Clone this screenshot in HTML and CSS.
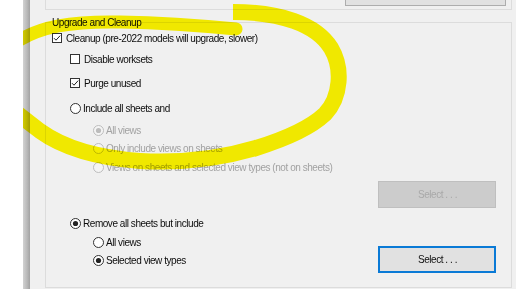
FILE: index.html
```html
<!DOCTYPE html>
<html>
<head>
<meta charset="utf-8">
<link rel="stylesheet" href="styles.css">
</head>
<body>
<div class="screen">
  <div class="desk"></div>
  <div class="frame"></div>
  <div class="dialog">
    <div class="prevbox"><div class="prevbtn"></div></div>
    <div class="group">
      <div class="legend">Upgrade and Cleanup</div>
      <div class="opt cb">
        <svg class="box" width="10" height="10" viewBox="0 0 10 10"><rect x="0.5" y="0.5" width="9" height="9" fill="#fff" stroke="#333"/><path d="M2 5.2 L4 7.2 L8.2 2.6" fill="none" stroke="#222" stroke-width="1"/></svg>
        <span>Cleanup (pre-2022 models will upgrade, slower)</span>
      </div>
      <div class="indent">
        <div class="opt cb m3">
          <svg class="box" width="10" height="10" viewBox="0 0 10 10"><rect x="0.5" y="0.5" width="9" height="9" fill="#fff" stroke="#333"/></svg>
          <span>Disable worksets</span>
        </div>
        <div class="opt cb m6">
          <svg class="box" width="10" height="10" viewBox="0 0 10 10"><rect x="0.5" y="0.5" width="9" height="9" fill="#fff" stroke="#333"/><path d="M2 5.2 L4 7.2 L8.2 2.6" fill="none" stroke="#222" stroke-width="1"/></svg>
          <span>Purge unused</span>
        </div>
        <div class="opt rb m7">
          <svg class="radio" width="11" height="11" viewBox="0 0 11 11"><circle cx="5.5" cy="5.5" r="5" fill="#fff" stroke="#333"/></svg>
          <span>Include all sheets and</span>
        </div>
        <div class="sub">
          <div class="opt rb off m4">
            <svg class="radio" width="11" height="11" viewBox="0 0 11 11"><circle cx="5.5" cy="5.5" r="5" fill="#f4f4f4" stroke="#bcbcbc"/><circle cx="5.5" cy="5.5" r="2.6" fill="#bcbcbc"/></svg>
            <span>All views</span>
          </div>
          <div class="opt rb off">
            <svg class="radio" width="11" height="11" viewBox="0 0 11 11"><circle cx="5.5" cy="5.5" r="5" fill="#f4f4f4" stroke="#bcbcbc"/></svg>
            <span>Only include views on sheets</span>
          </div>
          <div class="opt rb off m1">
            <svg class="radio" width="11" height="11" viewBox="0 0 11 11"><circle cx="5.5" cy="5.5" r="5" fill="#f4f4f4" stroke="#bcbcbc"/></svg>
            <span>Views on sheets and selected view types (not on sheets)</span>
          </div>
        </div>
      </div>
      <div class="btnrow">
        <div class="btn disabled">Select . . .</div>
      </div>
      <div class="lower">
        <div class="lowerleft">
          <div class="opt rb m6">
            <svg class="radio" width="11" height="11" viewBox="0 0 11 11"><circle cx="5.5" cy="5.5" r="5" fill="#fff" stroke="#333"/><circle cx="5.5" cy="5.5" r="2.6" fill="#222"/></svg>
            <span>Remove all sheets but include</span>
          </div>
          <div class="sub">
            <div class="opt rb m1">
              <svg class="radio" width="11" height="11" viewBox="0 0 11 11"><circle cx="5.5" cy="5.5" r="5" fill="#fff" stroke="#333"/></svg>
              <span>All views</span>
            </div>
            <div class="opt rb">
              <svg class="radio" width="11" height="11" viewBox="0 0 11 11"><circle cx="5.5" cy="5.5" r="5" fill="#fff" stroke="#333"/><circle cx="5.5" cy="5.5" r="2.6" fill="#222"/></svg>
              <span>Selected view types</span>
            </div>
          </div>
        </div>
        <div class="btn focused">Select . . .</div>
      </div>
    </div>
  </div>
  <svg class="ink" width="516" height="289" viewBox="0 0 516 289">
    <defs><clipPath id="win"><rect x="23" y="0" width="493" height="289"/></clipPath></defs>
    <g clip-path="url(#win)" fill="none" stroke="#fff700" stroke-linejoin="round">
      <path d="M18 41 C 40 27, 70 21, 120 22 C 170 23, 205 26, 236 29" stroke-width="13" stroke-linecap="round"/>
      <path d="M233 12 C 280 12, 316 24, 331 48 C 343 68, 341 97, 325 114 C 308 130, 282 140, 256 148 C 216 160, 176 163, 140 161 C 100 158, 65 149, 40 131 L 14 111" stroke-width="16" stroke-linecap="butt"/>
    </g>
  </svg>
</div>
</body>
</html>
```

FILE: styles.css
```css
html, body {
  margin: 0;
  padding: 0;
}
body {
  width: 516px;
  height: 289px;
  overflow: hidden;
  background: #fff;
  font-family: "Liberation Sans", Arial, sans-serif;
  font-size: 10px;
  letter-spacing: -0.45px;
  color: #0d0d0d;
}
.screen {
  position: relative;
  display: flex;
  height: 289px;
}
.desk {
  width: 23px;
  background: #fff;
}
.frame {
  width: 7px;
  background: linear-gradient(to right, #d2d2d2, #b8b8b8 60%, #a2a2a2);
}
.dialog {
  flex: 1;
  background: #f0f0f0;
  padding-left: 15px;
}
.prevbox {
  width: 467px;
  height: 10px;
  box-sizing: border-box;
  border: 1px solid #dcdcdc;
  border-top: none;
  display: flex;
  justify-content: flex-end;
  align-items: flex-start;
  padding-right: 5px;
}
.prevbtn {
  width: 161px;
  height: 6px;
  box-sizing: border-box;
  background: #e1e1e1;
  border: 1px solid #adadad;
  border-top: none;
}
.group {
  width: 467px;
  box-sizing: border-box;
  margin-top: 12px;
  border: 1px solid #dcdcdc;
  padding: 0 15px 14px 6px;
}
.legend {
  width: max-content;
  margin: -7px 0 0 -1px;
  padding: 0 1px;
  line-height: 13px;
  background: #f0f0f0;
}
.opt {
  display: flex;
  align-items: center;
  height: 18px;
  white-space: nowrap;
}
.opt .box {
  flex: none;
  margin-right: 4px;
}
.opt .radio {
  flex: none;
  margin-right: 2px;
}
.off {
  color: #a2a2a2;
}
.m1 { margin-top: 1px; }
.m3 { margin-top: 3px; }
.m4 { margin-top: 4px; }
.m6 { margin-top: 6px; }
.m7 { margin-top: 7px; }
.indent {
  margin-left: 18px;
}
.sub {
  margin-left: 23px;
}
.btnrow {
  display: flex;
  justify-content: flex-end;
  margin-top: 5px;
}
.btn {
  width: 118px;
  height: 27px;
  box-sizing: border-box;
  display: flex;
  align-items: center;
  justify-content: center;
  padding-left: 1px;
}
.btn.disabled {
  background: #cccccc;
  border: 1px solid #bfbfbf;
  color: #a9a9a9;
}
.btn.focused {
  background: #e1e1e1;
  border: 2px solid #0a7ad6;
  color: #111;
  margin-top: 38px;
}
.lower {
  display: flex;
  justify-content: space-between;
  align-items: flex-start;
}
.lowerleft {
  margin-left: 18px;
}
.ink {
  position: absolute;
  left: 0;
  top: 0;
  pointer-events: none;
  mix-blend-mode: multiply;
}
```
